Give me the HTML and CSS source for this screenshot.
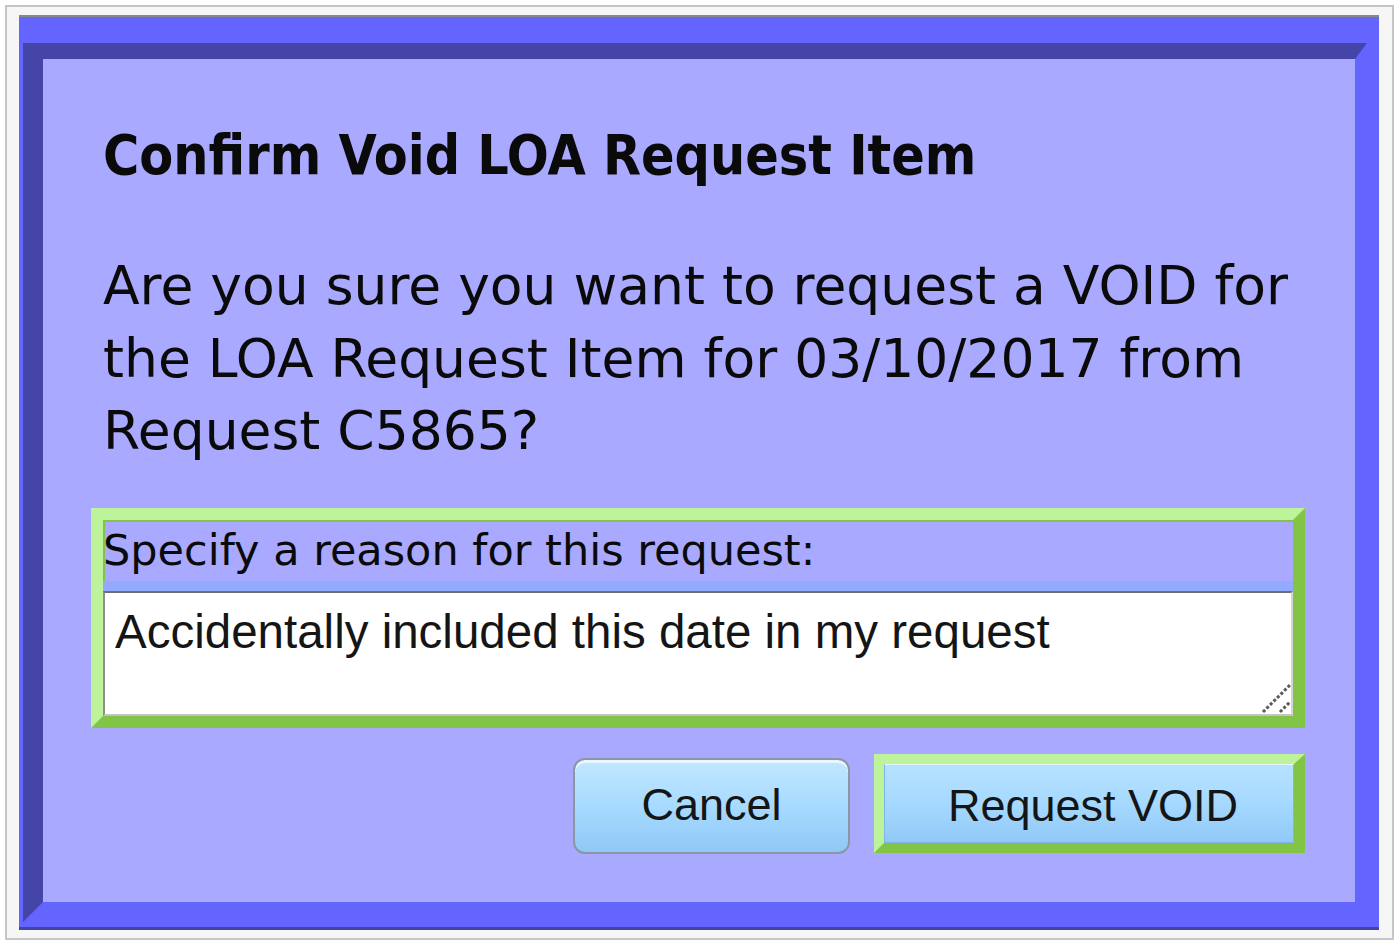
FILE: index.html
```html
<!DOCTYPE html>
<html>
<head>
<meta charset="utf-8">
<title>Confirm Void LOA Request Item</title>
<link rel="stylesheet" href="styles.css">
</head>
<body>
<div class="frame">
  <div class="dialog">
    <div class="bevel">
      <div class="content">
        <h1 class="title">Confirm Void LOA Request Item</h1>
        <p class="message">Are you sure you want to request a VOID for the LOA Request Item for 03/10/2017 from Request C5865?</p>
        <div class="group">
          <div class="label">Specify a reason for this request:</div>
          <div class="textbox">
            <span class="textbox-text">Accidentally included this date in my request</span>
            <svg class="grip" width="30" height="30" viewBox="0 0 30 30">
              <line x1="2" y1="28" x2="29" y2="1" stroke="#5a5a5a" stroke-width="3" stroke-dasharray="3 2"/>
              <line x1="19" y1="28" x2="29" y2="18" stroke="#5a5a5a" stroke-width="3" stroke-dasharray="3 2"/>
            </svg>
          </div>
        </div>
        <div class="actions">
          <button class="btn btn-cancel">Cancel</button>
          <div class="focus-frame">
            <button class="btn btn-primary">Request VOID</button>
          </div>
        </div>
      </div>
    </div>
  </div>
</div>
</body>
</html>
```

FILE: styles.css
```css
html, body {
  margin: 0;
  padding: 0;
  background: #ffffff;
}

.frame {
  margin: 5px 0 0 5px;
  width: 1389px;
  height: 935px;
  box-sizing: border-box;
  border: 2px solid #c6c6c6;
  background: #f6f6f6;
  padding: 8px 13px 8px 12px;
}

.dialog {
  height: 915px;
  box-sizing: border-box;
  background: #6464fe;
  border-top: 2px solid #888888;
  border-bottom: 3px solid #4444a4;
  padding: 26px 12px 5px 4px;
  display: flex;
  flex-direction: column;
}

.bevel {
  flex: 1;
  display: flex;
  flex-direction: column;
  border-style: solid;
  border-width: 16px 12px 20px 20px;
  border-color: #4545a8 #6464fe #6464fe #4545a8;
}

.content {
  flex: 1;
  background: #a9a9ff;
  padding: 64px 50px 0 48px;
  color: #0a0a0a;
}

.title {
  margin: 0 0 0 12px;
  font-family: "DejaVu Sans Condensed", "DejaVu Sans", sans-serif;
  font-stretch: condensed;
  font-weight: bold;
  font-size: 55px;
  line-height: 64px;
}

.message {
  margin: 63px 0 0 12px;
  font-family: "DejaVu Sans", sans-serif;
  font-size: 53.5px;
  line-height: 72.5px;
}

.group {
  margin-top: 40px;
  border-style: solid;
  border-width: 12px 12px 12px 12px;
  border-color: #bdf39a #82c546 #82c546 #bdf39a;
  box-shadow: inset 2px 2px 0 #84c24a;
  display: flex;
  flex-direction: column;
}

.label {
  height: 61px;
  line-height: 61px;
  border-bottom: 10px solid #92aaff;
  font-family: "DejaVu Sans", sans-serif;
  font-size: 43px;
  white-space: nowrap;
  overflow: hidden;
}

.textbox {
  position: relative;
  height: 125px;
  box-sizing: border-box;
  background: #ffffff;
  border-style: solid;
  border-width: 2px 2px 2px 2px;
  border-color: #6e6e6e #d4d4d4 #c4c4c4 #8e8e8e;
  padding: 11px 12px 0 10px;
  font-family: "Liberation Sans", Arial, sans-serif;
  font-size: 47.5px;
  line-height: 56px;
  color: #151515;
}

.grip {
  position: absolute;
  right: 0;
  bottom: 0;
}

.actions {
  margin-top: 26px;
  display: flex;
  justify-content: flex-end;
  align-items: flex-start;
  gap: 24px;
}

.btn {
  font-family: "Liberation Sans", Arial, sans-serif;
  font-size: 45px;
  color: #151515;
  margin: 0;
  cursor: pointer;
}

.btn-cancel {
  margin-top: 4px;
  width: 277px;
  height: 96px;
  box-sizing: border-box;
  border: 2px solid #8a96a4;
  border-radius: 12px;
  background: linear-gradient(#c2e7ff 0%, #aadcff 45%, #8fc8f7 100%);
  box-shadow: inset 0 3px 0 #e9f6ff;
  padding: 0 0 2px 0;
}

.focus-frame {
  width: 431px;
  height: 99px;
  box-sizing: border-box;
  border-style: solid;
  border-width: 10px 11px 10px 10px;
  border-color: #bdf39a #82c546 #82c546 #bdf39a;
  box-shadow: inset 1px 1px 0 #8fce58;
  display: flex;
}

.btn-primary {
  flex: 1;
  border: 1px solid #7bb6e6;
  border-top-color: #e6f5ff;
  border-radius: 0;
  background: linear-gradient(#b6e2ff 0%, #a6d9ff 50%, #90c8f7 100%);
  padding: 6px 0 0 8px;
}
```
